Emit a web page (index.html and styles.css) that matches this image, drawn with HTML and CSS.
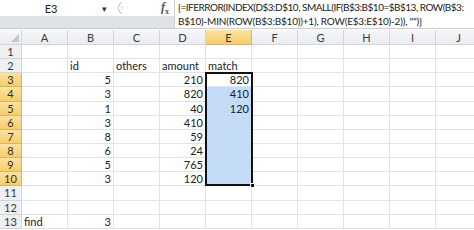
FILE: index.html
```html
<!DOCTYPE html>
<html lang="en">
<head>
    <meta charset="UTF-8">
    <meta name="viewport" content="width=device-width, initial-scale=1.0">
    <link rel="stylesheet" href="styles.css">
</head>
<body>
    <div class="formula-bar">
        <div class="left-pane">
            <div class="name-box">
                <span class="cell-ref">E3</span>
                <span class="arrow">&#9662;</span>
            </div>
            <div class="tools">
                <svg class="dots" width="14" height="14" viewBox="0 0 14 14">
                    <path d="M9 1.5 A6 6 0 0 0 9 12.5" fill="none" stroke="#c4c8ce" stroke-width="1.2"/>
                    <path d="M7.5 6 h3 M7.5 8 h3" stroke="#d0d4da" stroke-width="0.8"/>
                </svg>
                <span class="fx"><i>f</i><sub>x</sub></span>
            </div>
        </div>
        <div class="formula">
            <div class="line tight">{=IFERROR(INDEX(D$3:D$10, SMALL(IF(B$3:B$10=$B$13, ROW(B$3:</div>
            <div class="line">B$10)-MIN(ROW(B$3:B$10))+1), ROW(E$3:E$10)-2)), "")}</div>
        </div>
    </div>

    <div class="sheet">
        <div class="row">
            <div class="corner"></div>
            <div class="col-head">A</div>
            <div class="col-head">B</div>
            <div class="col-head">C</div>
            <div class="col-head">D</div>
            <div class="col-head active">E</div>
            <div class="col-head">F</div>
            <div class="col-head">G</div>
            <div class="col-head">H</div>
            <div class="col-head">I</div>
            <div class="col-head">J</div>
        </div>
        <div class="row">
            <div class="row-head">1</div>
            <div class="cell"></div><div class="cell"></div><div class="cell"></div><div class="cell"></div><div class="cell"></div>
            <div class="cell"></div><div class="cell"></div><div class="cell"></div><div class="cell"></div><div class="cell"></div>
        </div>
        <div class="row">
            <div class="row-head">2</div>
            <div class="cell"></div>
            <div class="cell">id</div>
            <div class="cell">others</div>
            <div class="cell">amount</div>
            <div class="cell">match</div>
            <div class="cell"></div><div class="cell"></div><div class="cell"></div><div class="cell"></div><div class="cell"></div>
        </div>
        <div class="row">
            <div class="row-head active">3</div>
            <div class="cell"></div>
            <div class="cell num">5</div>
            <div class="cell"></div>
            <div class="cell num">210</div>
            <div class="cell num">820</div>
            <div class="cell"></div><div class="cell"></div><div class="cell"></div><div class="cell"></div><div class="cell"></div>
        </div>
        <div class="row">
            <div class="row-head active">4</div>
            <div class="cell"></div>
            <div class="cell num">3</div>
            <div class="cell"></div>
            <div class="cell num">820</div>
            <div class="cell num picked">410</div>
            <div class="cell"></div><div class="cell"></div><div class="cell"></div><div class="cell"></div><div class="cell"></div>
        </div>
        <div class="row">
            <div class="row-head active">5</div>
            <div class="cell"></div>
            <div class="cell num">1</div>
            <div class="cell"></div>
            <div class="cell num">40</div>
            <div class="cell num picked">120</div>
            <div class="cell"></div><div class="cell"></div><div class="cell"></div><div class="cell"></div><div class="cell"></div>
        </div>
        <div class="row">
            <div class="row-head active">6</div>
            <div class="cell"></div>
            <div class="cell num">3</div>
            <div class="cell"></div>
            <div class="cell num">410</div>
            <div class="cell picked"></div>
            <div class="cell"></div><div class="cell"></div><div class="cell"></div><div class="cell"></div><div class="cell"></div>
        </div>
        <div class="row">
            <div class="row-head active">7</div>
            <div class="cell"></div>
            <div class="cell num">8</div>
            <div class="cell"></div>
            <div class="cell num">59</div>
            <div class="cell picked"></div>
            <div class="cell"></div><div class="cell"></div><div class="cell"></div><div class="cell"></div><div class="cell"></div>
        </div>
        <div class="row">
            <div class="row-head active">8</div>
            <div class="cell"></div>
            <div class="cell num">6</div>
            <div class="cell"></div>
            <div class="cell num">24</div>
            <div class="cell picked"></div>
            <div class="cell"></div><div class="cell"></div><div class="cell"></div><div class="cell"></div><div class="cell"></div>
        </div>
        <div class="row">
            <div class="row-head active">9</div>
            <div class="cell"></div>
            <div class="cell num">5</div>
            <div class="cell"></div>
            <div class="cell num">765</div>
            <div class="cell picked"></div>
            <div class="cell"></div><div class="cell"></div><div class="cell"></div><div class="cell"></div><div class="cell"></div>
        </div>
        <div class="row">
            <div class="row-head active">10</div>
            <div class="cell"></div>
            <div class="cell num">3</div>
            <div class="cell"></div>
            <div class="cell num">120</div>
            <div class="cell picked"></div>
            <div class="cell"></div><div class="cell"></div><div class="cell"></div><div class="cell"></div><div class="cell"></div>
        </div>
        <div class="row">
            <div class="row-head">11</div>
            <div class="cell"></div><div class="cell"></div><div class="cell"></div><div class="cell"></div><div class="cell"></div>
            <div class="cell"></div><div class="cell"></div><div class="cell"></div><div class="cell"></div><div class="cell"></div>
        </div>
        <div class="row">
            <div class="row-head">12</div>
            <div class="cell"></div><div class="cell"></div><div class="cell"></div><div class="cell"></div><div class="cell"></div>
            <div class="cell"></div><div class="cell"></div><div class="cell"></div><div class="cell"></div><div class="cell"></div>
        </div>
        <div class="row">
            <div class="row-head">13</div>
            <div class="cell">find</div>
            <div class="cell num">3</div>
            <div class="cell"></div><div class="cell"></div><div class="cell"></div>
            <div class="cell"></div><div class="cell"></div><div class="cell"></div><div class="cell"></div><div class="cell"></div>
        </div>

        <!-- selection box E3:E10 -->
        <div class="selection"><span class="handle"></span></div>
    </div>
</body>
</html>
```

FILE: styles.css
```css
* {
    margin: 0;
    padding: 0;
    box-sizing: border-box;
}
body {
    width: 474px;
    height: 230px;
    overflow: hidden;
    background: #ffffff;
    font-family: Lato, 'Open Sans', sans-serif;
    color: #222;
}

/* Formula bar */
.formula-bar {
    display: flex;
    height: 29px;
    background: #dfe3e8;
    border-bottom: 1px solid #c9ced6;
}
.left-pane {
    width: 174px;
    display: flex;
    align-items: flex-start;
}
.name-box {
    width: 113px;
    height: 16px;
    background: #fff;
    display: flex;
    align-items: center;
    font-size: 11px;
}
.cell-ref {
    width: 102px;
    text-align: center;
}
.arrow {
    width: 11px;
    font-size: 9px;
    color: #333;
}
.tools {
    flex: 1;
    height: 16px;
    display: flex;
    align-items: center;
    justify-content: space-between;
    padding: 0 5px 0 0;
    background: #fff;
}
.fx {
    font-family: 'Liberation Serif', serif;
    font-size: 12px;
    font-weight: bold;
    color: #555;
}
.fx sub {
    font-size: 8px;
}
.formula {
    flex: 1;
    background: #fff;
    border-left: 1px solid #c9ced6;
    padding: 0 0 0 3px;
    font-size: 10px;
    letter-spacing: -0.2px;
    line-height: 14px;
    overflow: hidden;
    color: #222;
}
.formula .line {
    white-space: nowrap;
}
.formula .tight {
    letter-spacing: -0.5px;
}

/* Sheet grid */
.sheet {
    position: relative;
    margin-top: 1px;
}
.row {
    display: grid;
    grid-template-columns: 22px repeat(10, 46px);
    height: 14.15px;
}
.row:first-child {
    height: 15px;
}
.corner,
.col-head,
.row-head {
    background: linear-gradient(#f6f7f9, #e9ecf0);
    border-right: 1px solid #d2d6dc;
    border-bottom: 1px solid #d2d6dc;
    font-size: 11px;
    color: #3a3a3a;
    display: flex;
    align-items: center;
    justify-content: center;
    line-height: 1;
}
.row-head {
    background: #eef0f3;
}
.corner {
    position: relative;
}
.corner::after {
    content: "";
    position: absolute;
    right: 2px;
    bottom: 2px;
    border-left: 8px solid transparent;
    border-bottom: 8px solid #c3c7cd;
}
.col-head.active,
.row-head.active {
    background: linear-gradient(#fbe3a1, #f5cd6b);
    border-color: #e2b35a;
    color: #333;
}
.cell {
    border-right: 1px solid #e1e3e6;
    border-bottom: 1px solid #e1e3e6;
    font-size: 11px;
    line-height: 13px;
    padding: 0 2px;
    white-space: nowrap;
    overflow: visible;
}
.num {
    text-align: right;
}
.picked {
    background: #c4dcf8;
    border-bottom-color: #c4dcf8;
}

.selection {
    position: absolute;
    left: 205px;
    top: calc(15px + 2 * 14.15px - 1px);
    width: 48px;
    height: calc(8 * 14.15px + 1px);
    border: 2px solid #111;
    pointer-events: none;
}
.handle {
    position: absolute;
    right: -4px;
    bottom: -4px;
    width: 5px;
    height: 5px;
    background: #111;
    border: 1px solid #fff;
}
```
